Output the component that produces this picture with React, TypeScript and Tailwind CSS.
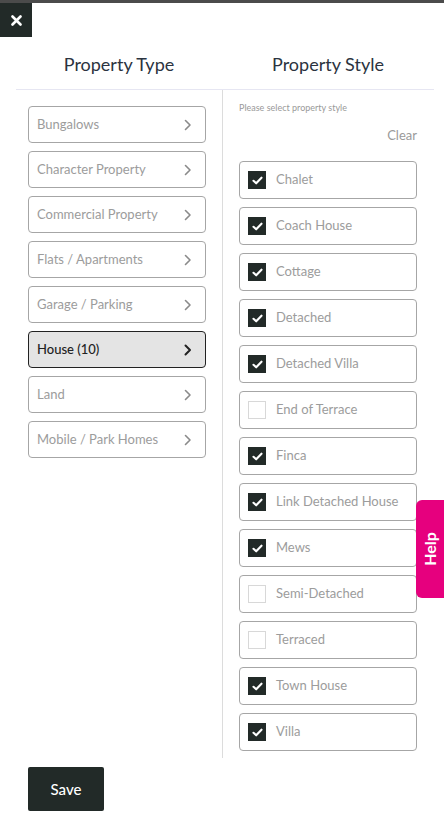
import React from "react";

const types = [
  { label: "Bungalows" },
  { label: "Character Property" },
  { label: "Commercial Property" },
  { label: "Flats / Apartments" },
  { label: "Garage / Parking" },
  { label: "House (10)", active: true },
  { label: "Land" },
  { label: "Mobile / Park Homes" },
];

const styles: [string, boolean][] = [
  ["Chalet", true],
  ["Coach House", true],
  ["Cottage", true],
  ["Detached", true],
  ["Detached Villa", true],
  ["End of Terrace", false],
  ["Finca", true],
  ["Link Detached House", true],
  ["Mews", true],
  ["Semi-Detached", false],
  ["Terraced", false],
  ["Town House", true],
  ["Villa", true],
];

function Chevron({ dark }: { dark?: boolean }) {
  return (
    <svg width="8" height="12" viewBox="0 0 8 12" fill="none">
      <path
        d="M1.5 1.5L6 6L1.5 10.5"
        stroke={dark ? "#222" : "#8a8a8a"}
        strokeWidth={dark ? 2 : 1.6}
        strokeLinecap="round"
        strokeLinejoin="round"
      />
    </svg>
  );
}

export default function App() {
  return (
    <div className="relative w-[444px] min-h-[822px] bg-white font-['Lato','Liberation_Sans',sans-serif]">
      <div className="h-[3px] bg-[#4b4b4b]" />
      <button className="flex h-[34px] w-8 items-center justify-center bg-[#222a28] text-white">
        <svg width="11" height="11" viewBox="0 0 11 11">
          <path d="M1.5 1.5L9.5 9.5M9.5 1.5L1.5 9.5" stroke="white" strokeWidth="2.6" strokeLinecap="round" />
        </svg>
      </button>

      <div className="mx-4 grid grid-cols-[206px_212px]">
        <div className="flex h-[53px] items-center justify-center border-b border-[#e6e6f2] pt-[2px] text-[18px] text-[#2b3340]">
          Property Type
        </div>
        <div className="flex h-[53px] items-center justify-center border-b border-[#e6e6f2] pt-[2px] text-[18px] text-[#2b3340]">
          Property Style
        </div>

        <div className="flex flex-col gap-2 pl-3 pr-4 pt-4">
          {types.map((t) => (
            <div
              key={t.label}
              className={
                t.active
                  ? "flex h-[37px] items-center justify-between rounded-[4px] border border-[#222] bg-[#e4e4e4] pl-2 pr-[13px] text-[13px] font-medium text-[#222]"
                  : "flex h-[37px] items-center justify-between rounded-[4px] border border-[#a6a6a6] bg-white pl-2 pr-[13px] text-[13px] text-[#9c9c9c]"
              }
            >
              <span>{t.label}</span>
              <Chevron dark={t.active} />
            </div>
          ))}
        </div>

        <div className="border-l border-[#dcdcdc] pb-[7px] pl-4 pr-[17px]">
          <p className="pt-[12px] text-[9px] leading-[12px] text-[#9a9a9a]">Please select property style</p>
          <div className="mt-[12px] text-right text-[13px] leading-[18px] text-[#9a9a9a]">Clear</div>
          <div className="mt-[17px] flex flex-col gap-2">
            {styles.map(([name, checked]) => (
              <div
                key={name}
                className="flex h-[38px] items-center gap-[10px] rounded-[4px] border border-[#a6a6a6] pl-2 text-[13px] text-[#9c9c9c]"
              >
                {checked ? (
                  <span className="flex h-[18px] w-[18px] items-center justify-center bg-[#222a28]">
                    <svg width="11" height="9" viewBox="0 0 11 9" fill="none">
                      <path d="M1.5 4.8L4.2 7.3L9.5 1.7" stroke="white" strokeWidth="2.1" strokeLinecap="round" strokeLinejoin="round" />
                    </svg>
                  </span>
                ) : (
                  <span className="h-[18px] w-[18px] border border-[#d8d8d8] bg-white" />
                )}
                <span>{name}</span>
              </div>
            ))}
          </div>
        </div>
      </div>

      <button className="ml-7 mt-[9px] h-[44px] w-[76px] rounded-[2px] bg-[#222a28] text-[15px] font-medium text-white">
        Save
      </button>

      <div className="absolute right-0 top-[500px] flex h-[98px] w-[28px] items-center justify-center rounded-l-[6px] bg-[#e6007e]">
        <span className="-rotate-90 text-[16px] font-bold text-white">Help</span>
      </div>
    </div>
  );
}
